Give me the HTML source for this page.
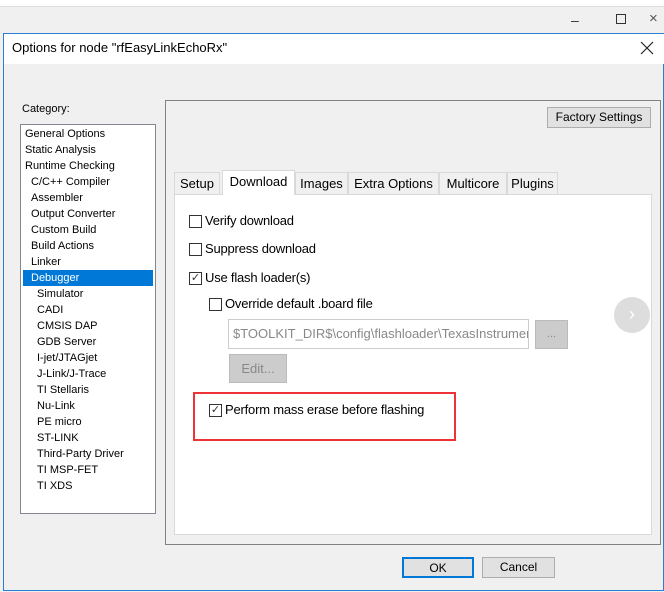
<!DOCTYPE html>
<html><head><meta charset="utf-8"><style>
*{margin:0;padding:0;box-sizing:border-box}
body{width:664px;height:592px;background:#f0f0f0;font-family:"Liberation Sans",sans-serif;position:relative;overflow:hidden;color:#000}
.a{position:absolute}
.li{position:absolute;left:4px;font-size:11px;height:16px;line-height:16px;white-space:nowrap}
.cb{position:absolute;width:13px;height:13px;border:1px solid #333;background:#fff}
.t{position:absolute;font-size:13px;white-space:nowrap;letter-spacing:-0.2px}
.btn{position:absolute;background:#e1e1e1;border:1px solid #adadad;font-size:12px;text-align:center}
.tab{position:absolute;top:172px;height:22px;border:1px solid #d9d9d9;border-bottom:none;background:#f0f0f0;font-size:13px;line-height:22px;text-align:center}
</style></head><body>
<div class="a" style="left:0;top:0;width:664px;height:7px;background:#fff;border-bottom:1px solid #ddd"></div>
<div class="a" style="left:571px;top:12px;font-size:14px;color:#333">&#8211;</div>
<div class="a" style="top:14px;width:10px;height:10px;border:1px solid #333;left:616px"></div>
<div class="a" style="top:10px;left:649px;font-size:15px;color:#555">×</div>
<div class="a" style="left:3px;top:33px;width:661px;height:558px;border:1px solid #2b7cd3;background:#f0f0f0"></div>
<div class="a" style="left:4px;top:34px;width:660px;height:30px;background:#fff"></div>
<div class="a" style="left:12px;top:40px;font-size:13px">Options for node "rfEasyLinkEchoRx"</div>
<svg class="a" style="left:640px;top:41px" width="14" height="14"><path d="M1 1L13 13M13 1L1 13" stroke="#222" stroke-width="1.2"/></svg>
<div class="a" style="left:22px;top:103px;font-size:11px">Category:</div>
<div class="a" style="left:20px;top:124px;width:136px;height:390px;border:1px solid #828790;background:#fff">
<div class="li" style="top:1px">General Options</div>
<div class="li" style="top:17px">Static Analysis</div>
<div class="li" style="top:33px">Runtime Checking</div>
<div class="li" style="top:49px;left:10px">C/C++ Compiler</div>
<div class="li" style="top:65px;left:10px">Assembler</div>
<div class="li" style="top:81px;left:10px">Output Converter</div>
<div class="li" style="top:97px;left:10px">Custom Build</div>
<div class="li" style="top:113px;left:10px">Build Actions</div>
<div class="li" style="top:129px;left:10px">Linker</div>
<div class="a" style="left:2px;top:145px;width:130px;height:16px;background:#0078d7"></div>
<div class="li" style="top:145px;left:10px;color:#fff">Debugger</div>
<div class="li" style="top:161px;left:16px">Simulator</div>
<div class="li" style="top:177px;left:16px">CADI</div>
<div class="li" style="top:193px;left:16px">CMSIS DAP</div>
<div class="li" style="top:209px;left:16px">GDB Server</div>
<div class="li" style="top:225px;left:16px">I-jet/JTAGjet</div>
<div class="li" style="top:241px;left:16px">J-Link/J-Trace</div>
<div class="li" style="top:257px;left:16px">TI Stellaris</div>
<div class="li" style="top:273px;left:16px">Nu-Link</div>
<div class="li" style="top:289px;left:16px">PE micro</div>
<div class="li" style="top:305px;left:16px">ST-LINK</div>
<div class="li" style="top:321px;left:16px">Third-Party Driver</div>
<div class="li" style="top:337px;left:16px">TI MSP-FET</div>
<div class="li" style="top:353px;left:16px">TI XDS</div>
</div>
<div class="a" style="left:165px;top:100px;width:496px;height:445px;border:1px solid #828282"></div>
<div class="btn" style="left:547px;top:107px;width:104px;height:21px;line-height:19px">Factory Settings</div>
<div class="a" style="left:174px;top:194px;width:478px;height:341px;background:#fff;border:1px solid #d9d9d9"></div>
<div class="tab" style="left:174px;width:46px">Setup</div>
<div class="tab" style="left:295px;width:53px">Images</div>
<div class="tab" style="left:348px;width:91px">Extra Options</div>
<div class="tab" style="left:439px;width:68px">Multicore</div>
<div class="tab" style="left:507px;width:51px">Plugins</div>
<div class="tab" style="left:222px;top:170px;width:73px;height:25px;background:#fff;line-height:22px">Download</div>
<div class="cb" style="left:189px;top:215px"></div><div class="t" style="left:205px;top:213px">Verify download</div>
<div class="cb" style="left:189px;top:243px"></div><div class="t" style="left:205px;top:241px">Suppress download</div>
<div class="cb" style="left:189px;top:272px;font-size:11px;line-height:11px;color:#333;text-align:center">✓</div><div class="t" style="left:205px;top:270px">Use flash loader(s)</div>
<div class="cb" style="left:209px;top:298px"></div><div class="t" style="left:225px;top:296px">Override default .board file</div>
<div class="a" style="left:228px;top:319px;width:301px;height:30px;border:1px solid #ccc;background:#fff;font-size:13px;color:#888;line-height:27px;padding-left:4px;white-space:nowrap;overflow:hidden">$TOOLKIT_DIR$\config\flashloader\TexasInstrumen</div>
<div class="a" style="left:535px;top:320px;width:33px;height:29px;background:#ccc;border:1px solid #bbb;color:#888;font-size:11px;text-align:center;line-height:26px">...</div>
<div class="a" style="left:229px;top:354px;width:58px;height:29px;background:#ccc;border:1px solid #bbb;color:#888;font-size:13px;text-align:center;line-height:27px">Edit...</div>
<div class="a" style="left:614px;top:297px;width:36px;height:36px;border-radius:50%;background:#ddd;color:#fff;font-size:18px;text-align:center;line-height:34px">›</div>
<div class="a" style="left:193px;top:392px;width:263px;height:49px;border:2px solid #ee3338"></div>
<div class="cb" style="left:209px;top:404px;font-size:11px;line-height:11px;color:#333;text-align:center">✓</div><div class="t" style="left:225px;top:402px">Perform mass erase before flashing</div>
<div class="btn" style="left:402px;top:557px;width:72px;height:21px;line-height:18px;border:2px solid #0078d7">OK</div>
<div class="btn" style="left:482px;top:557px;width:73px;height:21px;line-height:19px">Cancel</div>
</body></html>
